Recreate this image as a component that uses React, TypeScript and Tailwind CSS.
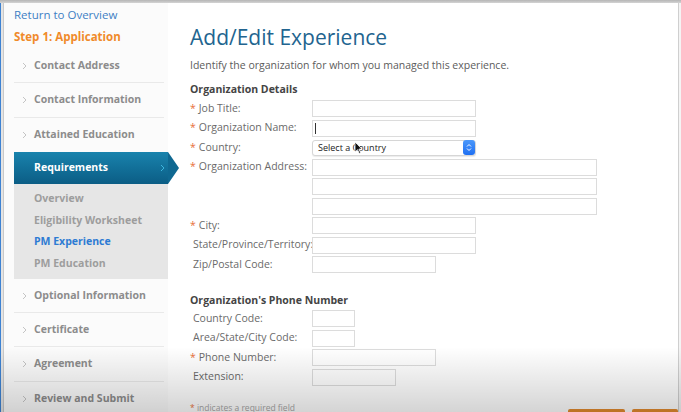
import React from "react"

const sans = { fontFamily: '"Open Sans", "Liberation Sans", sans-serif' }

function Chevron({ className = "" }: { className?: string }) {
  return (
    <svg width="5" height="8" viewBox="0 0 5 8" className={className}>
      <path d="M1 1l3 3-3 3" fill="none" stroke="currentColor" strokeWidth="1" />
    </svg>
  )
}

function NavItem({ label, last }: { label: string; last?: boolean }) {
  return (
    <div
      className={`flex items-center h-[34.3px] ml-[10px] mr-[4px] ${last ? "" : "border-b border-[#e9e9e9]"}`}
    >
      <Chevron className="ml-[8px] mr-[7px] text-[#c4c4c4]" />
      <span className="text-[10.5px] font-bold text-[#8c8c8c]">{label}</span>
    </div>
  )
}

function Req() {
  return <span className="text-[#e8703a] mr-[3px]">*</span>
}

function Field({
  label,
  required,
  width,
  cursor,
}: {
  label: string
  required?: boolean
  width: string
  cursor?: boolean
}) {
  return (
    <div className="flex items-center h-[17px]">
      <div className="w-[122px] text-[10.5px] text-[#6a6a6a] whitespace-nowrap">
        {required ? <Req /> : <span className="inline-block w-[3px]" />}
        {label}
      </div>
      <div className={`h-[17px] ${width} border border-[#dcdcdc] bg-white flex items-center`}>
        {cursor && <div className="ml-[2px] w-px h-[11px] bg-[#333]" />}
      </div>
    </div>
  )
}

export default function App() {
  return (
    <div className="relative w-[681px] h-[412px] overflow-hidden bg-white flex flex-col" style={sans}>
      <div className="h-[3px] bg-gradient-to-b from-[#b5b5b5] to-[#d4d4d4] shrink-0" />
      <div className="flex flex-1 min-h-0">
        {/* left edge */}
        <div className="w-[1px] bg-[#3d82d2]" />
        <div className="w-[2px] bg-[#e4e4e4]" />
        <div className="w-[1px] bg-[#c9c9c9]" />

        {/* sidebar */}
        <div className="w-[164px] shrink-0 bg-[#fbfbfb] flex flex-col">
          <div className="ml-[10px] mt-[4px] text-[11.5px] text-[#3e7fc4] leading-[16px]">Return to Overview</div>
          <div className="ml-[10px] mt-[6px] text-[11.5px] font-bold text-[#f08a2a] leading-[16px]">Step 1: Application</div>
          <div className="shrink-0 mt-[4px]">
            <NavItem label="Contact Address" />
            <NavItem label="Contact Information" />
            <NavItem label="Attained Education" last />
          </div>
          <div className="relative shrink-0 ml-[10px] h-[32px] bg-gradient-to-b from-[#1983ad] to-[#0b5d85] flex items-center">
            <span className="ml-[20px] text-[10.5px] font-bold text-white">Requirements</span>
            <Chevron className="absolute right-[3px] text-[#3db5de]" />
            <div className="absolute left-full top-0 w-0 h-0 border-t-[16px] border-b-[16px] border-l-[11px] border-t-transparent border-b-transparent border-l-[#0f6891]" />
          </div>
          <div className="shrink-0 ml-[10px] h-[95px] bg-[#e6e6e6] flex flex-col pt-[4px] pl-[20px] text-[10.5px] font-bold text-[#9d9d9d]">
            <div className="h-[21.7px] flex items-center">Overview</div>
            <div className="h-[21.7px] flex items-center">Eligibility Worksheet</div>
            <div className="h-[21.7px] flex items-center text-[#2d7bd3]">PM Experience</div>
            <div className="h-[21.7px] flex items-center">PM Education</div>
          </div>
          <div className="shrink-0">
            <NavItem label="Optional Information" />
            <NavItem label="Certificate" />
            <NavItem label="Agreement" />
            <NavItem label="Review and Submit" last />
          </div>
        </div>

        {/* main */}
        <div className="flex-1 min-w-0 flex flex-col pl-[22px]">
          <h1 className="mt-[22px] text-[21px] leading-[24px] text-[#22648f]">Add/Edit Experience</h1>
          <div className="h-px bg-[#ececec] mt-[1px]" />
          <p className="mt-[8px] text-[10.5px] text-[#5c5c5c] leading-[14px]">
            Identify the organization for whom you managed this experience.
          </p>
          <div className="mt-[10px] text-[10.5px] font-bold text-[#444] leading-[14px]">Organization Details</div>

          <div className="mt-[4px] flex flex-col gap-[2.5px]">
            <Field label="Job Title:" required width="w-[164px]" />
            <Field label="Organization Name:" required width="w-[164px]" cursor />
            <div className="relative flex items-center h-[17px]">
              <div className="w-[122px] text-[10.5px] text-[#6a6a6a]">
                <Req />
                Country:
              </div>
              <div className="h-[16px] w-[164px] border border-[#d6d6d6] rounded-[3px] bg-white flex items-center shadow-[0_1px_1px_rgba(0,0,0,0.08)]">
                <span className="ml-[5px] flex-1 text-[9px] text-[#222]">Select a Country</span>
                <div className="w-[12px] h-[15px] rounded-[3px] bg-gradient-to-b from-[#4b98fb] to-[#1f6ff2] flex items-center justify-center">
                  <svg width="6" height="9" viewBox="0 0 6 9">
                    <path d="M1 3.5L3 1.5 5 3.5M1 5.5L3 7.5 5 5.5" fill="none" stroke="white" strokeWidth="1" />
                  </svg>
                </div>
              </div>
              <svg className="absolute left-[164px] top-[2px]" width="9" height="13" viewBox="0 0 9 13">
                <path d="M1 1v10l2.5-2.3 1.8 3.8 1.4-.7-1.8-3.7H8z" fill="#111" stroke="white" strokeWidth="0.8" />
              </svg>
            </div>
            <Field label="Organization Address:" required width="w-[285px]" />
            <Field label="" width="w-[285px]" />
            <Field label="" width="w-[285px]" />
            <Field label="City:" required width="w-[164px]" />
            <Field label="State/Province/Territory:" width="w-[164px]" />
            <Field label="Zip/Postal Code:" width="w-[124px]" />
          </div>

          <div className="mt-[20px] text-[10.5px] font-bold text-[#444] leading-[14px]">Organization's Phone Number</div>
          <div className="mt-[3px] flex flex-col gap-[2.5px]">
            <Field label="Country Code:" width="w-[43px]" />
            <Field label="Area/State/City Code:" width="w-[43px]" />
            <Field label="Phone Number:" required width="w-[124px]" />
            <Field label="Extension:" width="w-[84px]" />
          </div>

          <div className="mt-[16px] text-[8.5px] text-[#a5a5a5] leading-[12px]">
            <span className="text-[#e8703a]">*</span> indicates a required field
          </div>
        </div>

        {/* right edge */}
        <div className="w-[1px] bg-[#cfcfcf]" />
        <div className="w-[2px] bg-[#f4f4f4]" />
      </div>

      {/* partially visible buttons */}
      <div className="absolute left-[568px] top-[409px] w-[57px] h-[6px] bg-[#e38a2e] rounded-t-[2px]" />
      <div className="absolute left-[632px] top-[409px] w-[46px] h-[6px] bg-[#e38a2e] rounded-t-[2px]" />

      {/* video vignette */}
      <div className="pointer-events-none absolute left-0 right-0 bottom-0 h-[65px] bg-gradient-to-b from-transparent to-[rgba(0,0,0,0.17)]" />
    </div>
  )
}
